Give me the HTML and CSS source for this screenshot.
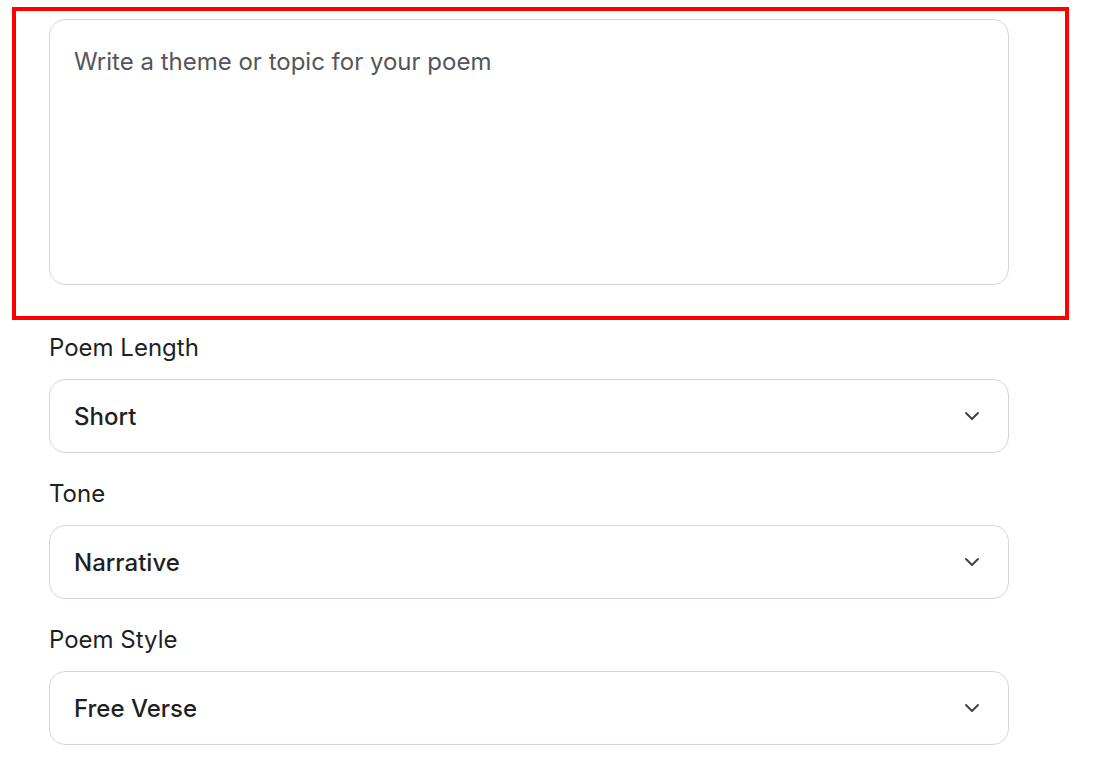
FILE: index.html
```html
<!DOCTYPE html>
<html lang="en">
<head>
<meta charset="utf-8">
<title>Poem form</title>
<link rel="stylesheet" href="styles.css">
</head>
<body>
<main class="form">
  <div class="highlight">
    <textarea class="topic" placeholder="Write a theme or topic for your poem"></textarea>
  </div>
  <div class="field">
    <label class="label">Poem Length</label>
    <div class="select">
      <span class="value">Short</span>
      <svg class="chev" width="16" height="10" viewBox="0 0 16 10"><path d="M2 2 L8 8 L14 2" fill="none" stroke="#444" stroke-width="2" stroke-linecap="round" stroke-linejoin="round"/></svg>
    </div>
  </div>
  <div class="field">
    <label class="label">Tone</label>
    <div class="select">
      <span class="value">Narrative</span>
      <svg class="chev" width="16" height="10" viewBox="0 0 16 10"><path d="M2 2 L8 8 L14 2" fill="none" stroke="#444" stroke-width="2" stroke-linecap="round" stroke-linejoin="round"/></svg>
    </div>
  </div>
  <div class="field">
    <label class="label">Poem Style</label>
    <div class="select">
      <span class="value">Free Verse</span>
      <svg class="chev" width="16" height="10" viewBox="0 0 16 10"><path d="M2 2 L8 8 L14 2" fill="none" stroke="#444" stroke-width="2" stroke-linecap="round" stroke-linejoin="round"/></svg>
    </div>
  </div>
</main>
</body>
</html>
```
FILE: styles.css
```css
* { box-sizing: border-box; }
html, body { margin: 0; padding: 0; background: #ffffff; }
body {
  font-family: Inter, "Noto Sans", sans-serif;
  color: #1f1f24;
}
.form {
  display: flex;
  flex-direction: column;
  padding: 7px 0 0 12px;
  width: 1069px;
}
.highlight {
  border: 4px solid #ff0000;
  padding: 8px 56px 31px 33px;
  height: 313px;
}
.topic {
  display: block;
  width: 960px;
  height: 266px;
  border: 1px solid #d6d4e4;
  border-radius: 16px;
  padding: 26px 24px;
  font-family: Inter, "Noto Sans", sans-serif;
  font-size: 24px;
  line-height: 1.3;
  color: #333;
  resize: none;
  outline: none;
  background: #fff;
}
.topic::placeholder { color: #55555c; opacity: 1; }
.field {
  display: flex;
  flex-direction: column;
  gap: 13px;
  padding-left: 37px;
  margin-top: 10px;
}
.field + .field { margin-top: 23px; }
.label {
  font-size: 24px;
  line-height: 36px;
  font-weight: 400;
  color: #1f1f24;
}
.select {
  width: 960px;
  height: 74px;
  border: 1px solid #d6d4e4;
  border-radius: 16px;
  display: flex;
  align-items: center;
  justify-content: space-between;
  padding: 0 28px 0 24px;
}
.value {
  font-size: 24px;
  font-weight: 500;
  color: #1f1f24;
}
.chev { display: block; }
```
